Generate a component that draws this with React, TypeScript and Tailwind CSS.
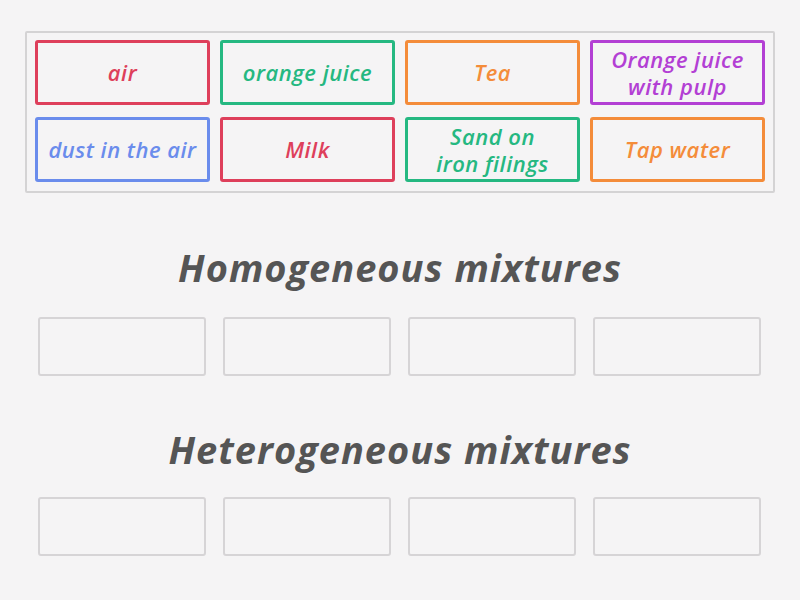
import React from "react";

const tiles: { text: string[]; color: string }[] = [
  { text: ["air"], color: "red" },
  { text: ["orange juice"], color: "green" },
  { text: ["Tea"], color: "orange" },
  { text: ["Orange juice", "with pulp"], color: "purple" },
  { text: ["dust in the air"], color: "blue" },
  { text: ["Milk"], color: "red" },
  { text: ["Sand on", "iron filings"], color: "green" },
  { text: ["Tap water"], color: "orange" },
];

const colorClass: Record<string, string> = {
  red: "border-[#de3f5b] text-[#de3f5b]",
  green: "border-[#25b881] text-[#25b881]",
  orange: "border-[#f48c3a] text-[#f48c3a]",
  purple: "border-[#b33fd4] text-[#b33fd4]",
  blue: "border-[#6a8cec] text-[#6a8cec]",
};

const font = { fontFamily: "'Open Sans', Lato, sans-serif" };

function DropRow() {
  return (
    <div className="flex gap-[17px] pl-[38px]">
      {[0, 1, 2, 3].map((i) => (
        <div
          key={i}
          className="w-[168px] h-[59px] border-2 border-[#d6d4d6] rounded-[3px]"
        />
      ))}
    </div>
  );
}

export default function App() {
  return (
    <div
      className="w-[800px] h-[600px] bg-[#f5f4f5] overflow-hidden pt-[31px]"
      style={font}
    >
      <div className="ml-[25px] w-[750px] h-[162px] border-2 border-[#d4d3d4] rounded-[2px] pl-[8px] pt-[7px]">
        <div className="grid grid-cols-[repeat(4,175px)] gap-x-[10px] gap-y-[12px]">
          {tiles.map((t, i) => (
            <div
              key={i}
              className={`h-[65px] border-[3px] rounded-[3px] flex flex-col items-center justify-center italic font-semibold text-[22px] leading-[27px] tracking-[0.5px] ${colorClass[t.color]}`}
            >
              {t.text.map((line, j) => (
                <span key={j}>{line}</span>
              ))}
            </div>
          ))}
        </div>
      </div>
      <div className="mt-[52px] text-center italic font-bold text-[38px] leading-[44px] tracking-[1px] text-[#555555]">
        Homogeneous mixtures
      </div>
      <div className="mt-[28px]">
        <DropRow />
      </div>
      <div className="mt-[51px] text-center italic font-bold text-[38px] leading-[44px] tracking-[1px] text-[#555555]">
        Heterogeneous mixtures
      </div>
      <div className="mt-[26px]">
        <DropRow />
      </div>
    </div>
  );
}
